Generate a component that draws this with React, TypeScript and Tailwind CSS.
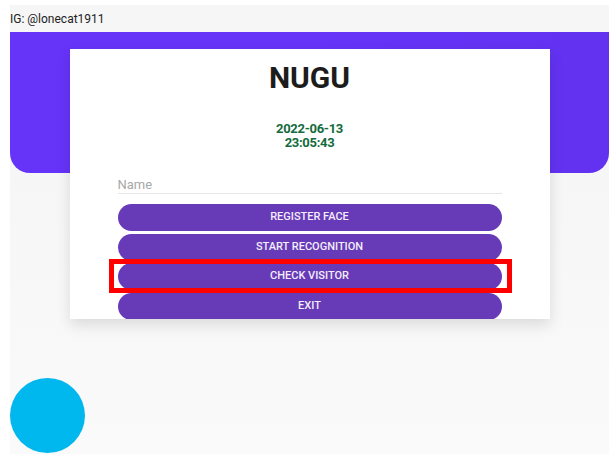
import React from "react";

const buttons = ["REGISTER FACE", "START RECOGNITION", "CHECK VISITOR", "EXIT"];

export default function App() {
  return (
    <div
      className="h-[454px] w-[616px] overflow-hidden bg-white"
      style={{ fontFamily: "Roboto, 'Liberation Sans', sans-serif" }}
    >
      <div className="ml-[10px] mt-[5px] h-[449px] w-[599px] bg-gradient-to-b from-[#f4f4f4] to-[#fafafa]">
        {/* top bar */}
        <div className="flex h-[27px] items-center bg-[#f6f6f6] text-[12px] text-[#222]">
          IG: @lonecat1911
        </div>

        {/* purple header */}
        <div className="h-[141px] rounded-b-[20px] bg-gradient-to-r from-[#6633f8] via-[#6633f8] to-[#6232f0]" />

        {/* card */}
        <div className="relative mx-auto -mt-[124px] h-[270px] w-[480px] overflow-hidden bg-white px-12 shadow-[0_6px_14px_rgba(0,0,0,0.12)]">
          <h1 className="pt-[11px] text-center text-[30px] font-bold leading-[36px] text-[#1c1c1c]">
            NUGU
          </h1>
          <div className="mt-[26px] text-center text-[13px] font-bold leading-[14px] tracking-[-0.3px] text-[#136b3c]">
            <div>2022-06-13</div>
            <div>23:05:43</div>
          </div>
          <div className="mt-[27px] border-b border-[#e6e6e6] pb-px text-[13px] leading-[15px] text-[#a8a8a8]">
            Name
          </div>
          <div className="mt-[10px] flex flex-col gap-[2.5px]">
            {buttons.map((b) => (
              <div
                key={b}
                className="flex h-[27px] items-center justify-center rounded-full bg-[#673ab7] text-[11px] font-medium text-[#f3eefa]"
              >
                {b}
              </div>
            ))}
          </div>
        </div>

        {/* blue circle */}
        <div className="mt-[59px] h-[75px] w-[75px] rounded-full bg-[#00b7ee]" />
      </div>

      {/* annotation */}
      <div className="pointer-events-none absolute left-[109px] top-[259px] h-[34px] w-[403px] border-[5px] border-[#ff0000]" />
    </div>
  );
}
